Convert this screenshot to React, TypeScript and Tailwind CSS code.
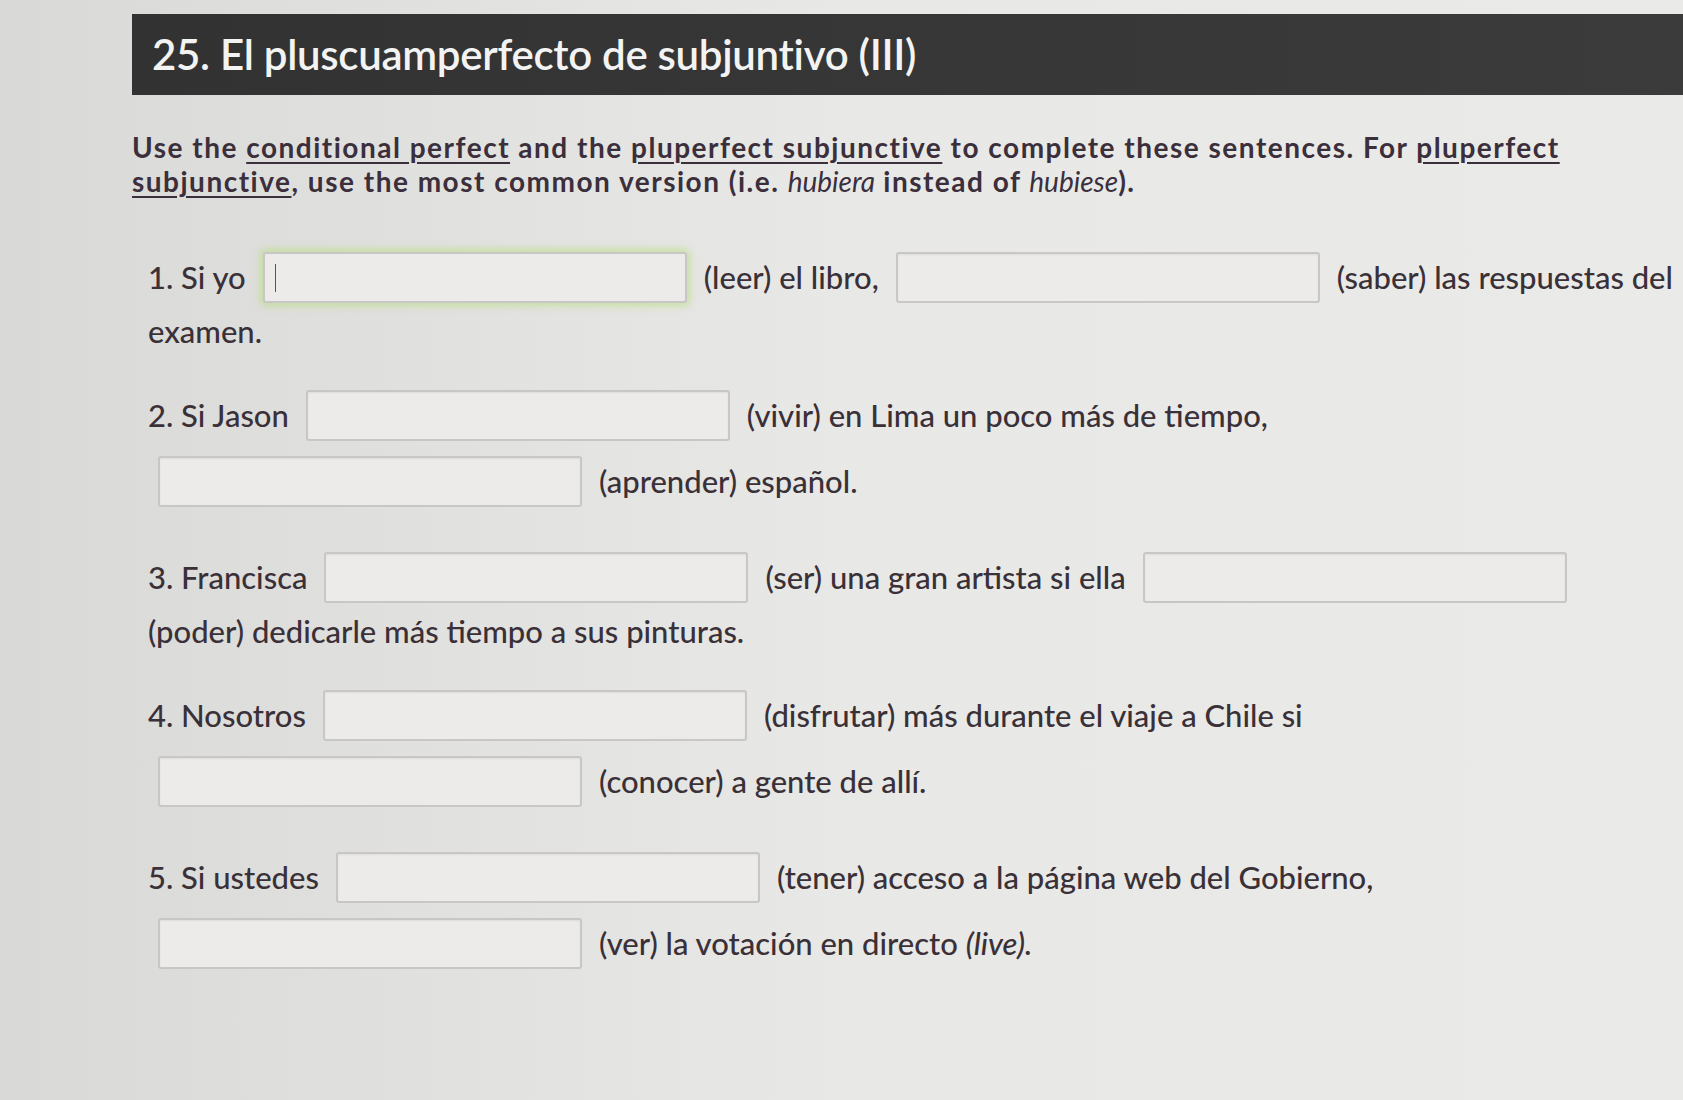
const font = { fontFamily: "Lato, 'Open Sans', sans-serif" };

const Blank = ({ focused = false, lead = false }: { focused?: boolean; lead?: boolean }) => (
  <div
    className={`relative h-[51px] w-[424px] shrink-0 rounded-[3px] border-2 border-[#c8c6c6] bg-[#ecebea] ${
      lead ? "ml-[10px]" : ""
    } ${focused ? "shadow-[0_0_7px_3px_rgba(176,222,110,0.55)]" : "shadow-[inset_0_1px_2px_rgba(0,0,0,0.06)]"}`}
  >
    {focused && <span className="absolute left-[10px] top-[10px] h-[28px] w-[1px] bg-[#555]" />}
  </div>
);

const Row = ({ children, tall = true }: { children: React.ReactNode; tall?: boolean }) => (
  <div className={`flex items-center gap-[17px] whitespace-nowrap ${tall ? "h-[66px]" : "h-[42px]"}`}>
    {children}
  </div>
);

export default function App() {
  return (
    <div
      className="min-h-[1100px] w-full overflow-hidden bg-gradient-to-r from-[#d9d9d7] via-[#e8e8e6] to-[#eaeae8] pt-[14px] text-[#3a3037]"
      style={font}
    >
      <div className="ml-[132px] flex h-[81px] items-center bg-gradient-to-r from-[#323232] to-[#3b3b3b] pl-[20px]">
        <h1 className="text-[42px] font-semibold tracking-[-0.3px] text-[#f3f3f3]">
          25. El pluscuamperfecto de subjuntivo (III)
        </h1>
      </div>

      <p className="ml-[132px] mt-[35px] whitespace-nowrap text-[28px] font-bold leading-[34px] tracking-[1.5px] text-[#3b2f3c]">
        Use the <span className="underline decoration-2 underline-offset-4">conditional perfect</span> and the{" "}
        <span className="underline decoration-2 underline-offset-4">pluperfect subjunctive</span> to complete these
        sentences. For <span className="underline decoration-2 underline-offset-4">pluperfect</span>
        <br />
        <span className="underline decoration-2 underline-offset-4">subjunctive</span>, use the most common version
        (i.e. <span className="font-normal italic tracking-normal">hubiera</span> instead of{" "}
        <span className="font-normal italic tracking-normal">hubiese</span>).
      </p>

      <div className="ml-[148px] mt-[46px] flex flex-col gap-[30px] text-[31px] font-medium">
        <div>
          <Row>
            <span>1. Si yo</span>
            <Blank focused />
            <span>(leer) el libro,</span>
            <Blank />
            <span>(saber) las respuestas del</span>
          </Row>
          <Row tall={false}>
            <span>examen.</span>
          </Row>
        </div>

        <div>
          <Row>
            <span>2. Si Jason</span>
            <Blank />
            <span>(vivir) en Lima un poco más de tiempo,</span>
          </Row>
          <Row>
            <Blank lead />
            <span>(aprender) español.</span>
          </Row>
        </div>

        <div>
          <Row>
            <span>3. Francisca</span>
            <Blank />
            <span>(ser) una gran artista si ella</span>
            <Blank />
          </Row>
          <Row tall={false}>
            <span>(poder) dedicarle más tiempo a sus pinturas.</span>
          </Row>
        </div>

        <div>
          <Row>
            <span>4. Nosotros</span>
            <Blank />
            <span>(disfrutar) más durante el viaje a Chile si</span>
          </Row>
          <Row>
            <Blank lead />
            <span>(conocer) a gente de allí.</span>
          </Row>
        </div>

        <div>
          <Row>
            <span>5. Si ustedes</span>
            <Blank />
            <span>(tener) acceso a la página web del Gobierno,</span>
          </Row>
          <Row>
            <Blank lead />
            <span>
              (ver) la votación en directo <span className="italic">(live).</span>
            </span>
          </Row>
        </div>
      </div>
    </div>
  );
}
